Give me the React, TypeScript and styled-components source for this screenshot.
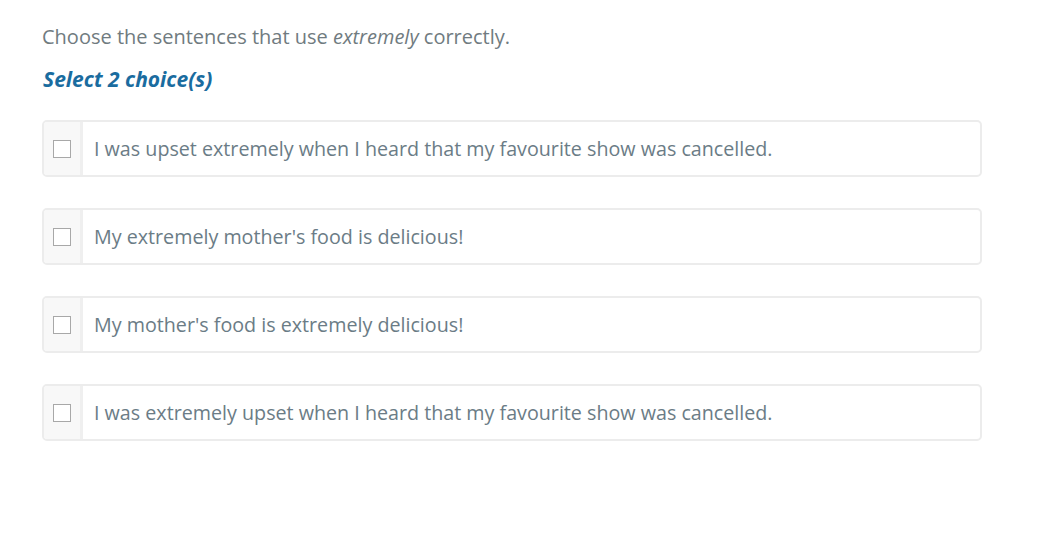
import React from "react";
import styled, { createGlobalStyle } from "styled-components";

const Global = createGlobalStyle`
  html, body { margin: 0; padding: 0; background: #ffffff; }
  body { font-family: "Open Sans", "Noto Sans", sans-serif; }
`;

const Page = styled.div`
  padding: 22px 78px 0 42px;
  display: flex;
  flex-direction: column;
`;

const Prompt = styled.p`
  margin: 0;
  font-size: 20px;
  line-height: 30px;
  color: #707b80;
  em { font-style: italic; }
`;

const Instruction = styled.h3`
  margin: 12px 0 0 1px;
  font-size: 21px;
  line-height: 30px;
  font-weight: 700;
  font-style: italic;
  color: #1a6c9f;
`;

const Choices = styled.ul`
  list-style: none;
  margin: 26px 0 0;
  padding: 0;
  display: flex;
  flex-direction: column;
  gap: 31px;
`;

const Choice = styled.li`
  display: flex;
  height: 57px;
  box-sizing: border-box;
  border: 2px solid #ececec;
  border-radius: 5px;
  overflow: hidden;
  background: #fff;
`;

const BoxCell = styled.div`
  width: 36px;
  flex: none;
  background: #f8f8f8;
  border-right: 3px solid #efefef;
  display: flex;
  align-items: center;
  justify-content: center;
`;

const Box = styled.span`
  width: 18px;
  height: 18px;
  box-sizing: border-box;
  border: 1px solid #a8a8a8;
  background: #fff;
`;

const Label = styled.div`
  display: flex;
  align-items: center;
  padding-left: 11px;
  font-size: 19.7px;
  color: #6b7c86;
`;

const items = [
  "I was upset extremely when I heard that my favourite show was cancelled.",
  "My extremely mother's food is delicious!",
  "My mother's food is extremely delicious!",
  "I was extremely upset when I heard that my favourite show was cancelled.",
];

export default function App() {
  return (
    <>
      <Global />
      <Page>
        <Prompt>
          Choose the sentences that use <em>extremely</em> correctly.
        </Prompt>
        <Instruction>Select 2 choice(s)</Instruction>
        <Choices>
          {items.map((t) => (
            <Choice key={t}>
              <BoxCell>
                <Box />
              </BoxCell>
              <Label>{t}</Label>
            </Choice>
          ))}
        </Choices>
      </Page>
    </>
  );
}
